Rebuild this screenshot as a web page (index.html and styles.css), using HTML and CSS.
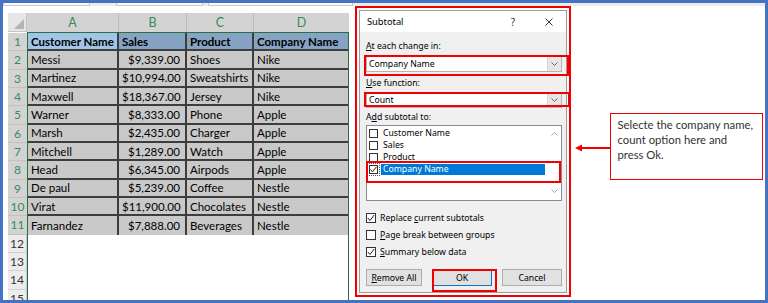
FILE: index.html
```html
<!DOCTYPE html>
<html lang="en">
<head>
<meta charset="UTF-8" />
<meta name="viewport" content="width=device-width, initial-scale=1" />
<title>Subtotal by Company Name</title>
<link rel="stylesheet" href="styles.css">
</head>
<body>
<div class="window">
  <div class="formula-strip">
    <span class="strip-box name-box"></span>
    <span class="strip-box fx-box"></span>
    <span class="strip-box bar-box"></span>
  </div>

  <div class="workspace">
    <!-- feuille -->
    <div class="sheet">
      <div class="col-heads">
        <div class="corner"></div>
        <div class="col-head col-a">A</div>
        <div class="col-head col-b">B</div>
        <div class="col-head col-c">C</div>
        <div class="col-head col-d">D</div>
      </div>
      <div class="sheet-body">
        <div class="row-heads">
          <div class="row-head sel">1</div>
          <div class="row-head sel">2</div>
          <div class="row-head sel">3</div>
          <div class="row-head sel">4</div>
          <div class="row-head sel">5</div>
          <div class="row-head sel">6</div>
          <div class="row-head sel">7</div>
          <div class="row-head sel">8</div>
          <div class="row-head sel">9</div>
          <div class="row-head sel">10</div>
          <div class="row-head sel">11</div>
          <div class="row-head">12</div>
          <div class="row-head">13</div>
          <div class="row-head">14</div>
          <div class="row-head">15</div>
        </div>
        <div class="selection">
          <table class="data">
            <colgroup>
              <col class="w-a"><col class="w-b"><col class="w-c"><col class="w-d">
            </colgroup>
            <tr class="head">
              <td class="active">Customer Name</td><td>Sales</td><td>Product</td><td>Company Name</td>
            </tr>
            <tr><td>Messi</td><td class="num">$9,339.00</td><td>Shoes</td><td>Nike</td></tr>
            <tr><td>Martinez</td><td class="num">$10,994.00</td><td>Sweatshirts</td><td>Nike</td></tr>
            <tr><td>Maxwell</td><td class="num">$18,367.00</td><td>Jersey</td><td>Nike</td></tr>
            <tr><td>Warner</td><td class="num">$8,333.00</td><td>Phone</td><td>Apple</td></tr>
            <tr><td>Marsh</td><td class="num">$2,435.00</td><td>Charger</td><td>Apple</td></tr>
            <tr><td>Mitchell</td><td class="num">$1,289.00</td><td>Watch</td><td>Apple</td></tr>
            <tr><td>Head</td><td class="num">$6,345.00</td><td>Airpods</td><td>Apple</td></tr>
            <tr><td>De paul</td><td class="num">$5,239.00</td><td>Coffee</td><td>Nestle</td></tr>
            <tr><td>Virat</td><td class="num">$11,900.00</td><td>Chocolates</td><td>Nestle</td></tr>
            <tr><td>Farnandez</td><td class="num">$7,888.00</td><td>Beverages</td><td>Nestle</td></tr>
          </table>
          <span class="fill-handle"></span>
        </div>
      </div>
    </div>

    <!-- boîte de dialogue Sous-total -->
    <div class="dialog-mark">
      <div class="dialog">
        <div class="dialog-title">
          <span class="title-text">Subtotal</span>
          <span class="title-btn">?</span>
          <span class="title-btn close">
            <svg width="8" height="8" viewBox="0 0 8 8"><path d="M0.5 0.5 L7.5 7.5 M7.5 0.5 L0.5 7.5" stroke="#333" stroke-width="1"/></svg>
          </span>
        </div>
        <div class="dialog-body">
          <div class="label"><u>A</u>t each change in:</div>
          <div class="combo combo-first">
            <span class="combo-value">Company Name</span>
            <span class="combo-arrow"><svg width="7" height="4" viewBox="0 0 7 4"><polyline points="0.5,0.5 3.5,3.5 6.5,0.5" fill="none" stroke="#666"/></svg></span>
            <span class="mark mark-first"></span>
          </div>
          <div class="label label-fn"><u>U</u>se function:</div>
          <div class="combo combo-second">
            <span class="combo-value">Count</span>
            <span class="combo-arrow"><svg width="7" height="4" viewBox="0 0 7 4"><polyline points="0.5,0.5 3.5,3.5 6.5,0.5" fill="none" stroke="#666"/></svg></span>
            <span class="mark mark-second"></span>
          </div>
          <div class="label label-add">A<u>d</u>d subtotal to:</div>
          <div class="listbox">
            <div class="list-items">
              <div class="list-item"><span class="check small"></span><span class="item-text">Customer Name</span></div>
              <div class="list-item"><span class="check small"></span><span class="item-text">Sales</span></div>
              <div class="list-item"><span class="check small"></span><span class="item-text">Product</span></div>
              <div class="list-item picked">
                <span class="check small"><svg width="7" height="7" viewBox="0 0 7 7"><polyline points="0.5,3.5 2.5,5.8 6.5,0.8" fill="none" stroke="#222" stroke-width="1"/></svg></span>
                <span class="item-text">Company Name</span>
                <span class="mark mark-item"></span>
              </div>
            </div>
            <div class="scroll">
              <svg width="7" height="4" viewBox="0 0 7 4"><polyline points="0.5,3.5 3.5,0.5 6.5,3.5" fill="none" stroke="#a6a6a6"/></svg>
              <svg width="7" height="4" viewBox="0 0 7 4"><polyline points="0.5,0.5 3.5,3.5 6.5,0.5" fill="none" stroke="#a6a6a6"/></svg>
            </div>
          </div>
          <div class="options">
            <div class="option"><span class="check"><svg width="8" height="8" viewBox="0 0 8 8"><polyline points="0.8,4 3,6.5 7.2,1" fill="none" stroke="#222" stroke-width="1"/></svg></span><span>Replace <u>c</u>urrent subtotals</span></div>
            <div class="option"><span class="check"></span><span><u>P</u>age break between groups</span></div>
            <div class="option"><span class="check"><svg width="8" height="8" viewBox="0 0 8 8"><polyline points="0.8,4 3,6.5 7.2,1" fill="none" stroke="#222" stroke-width="1"/></svg></span><span><u>S</u>ummary below data</span></div>
          </div>
          <div class="buttons">
            <span class="btn btn-remove"><span><u>R</u>emove All</span></span>
            <span class="btn btn-ok">OK<span class="mark mark-ok"></span></span>
            <span class="btn btn-cancel">Cancel</span>
          </div>
        </div>
      </div>
    </div>

    <!-- note -->
    <div class="note">
      <svg class="note-arrow" width="35" height="10" viewBox="0 0 35 10">
        <line x1="5" y1="5" x2="35" y2="5" stroke="#f20000" stroke-width="2"/>
        <polygon points="0,5 7,1.5 7,8.5" fill="#f20000"/>
      </svg>
      <div class="note-box">Selecte the company name,<br>count option here and<br>press Ok.</div>
    </div>
  </div>
</div>
</body>
</html>
```

FILE: styles.css
```css
:root {
  --frame-blue: #4472c4;
  --mark-red: #f20000;
  --xl-green: #217346;
  --xl-green-text: #3a8a5a;
  --cell-line: #3d3d3d;
  --sel-grey: #c9c9c9;
  --head-grey: #d3d3d3;
  --win-blue: #0078d7;
}
* {
  box-sizing: border-box;
}
body {
  margin: 0;
  background: #fff;
}
.window {
  width: 768px;
  height: 303px;
  border: 3px solid var(--frame-blue);
  display: flex;
  flex-direction: column;
  overflow: hidden;
  background: #fff;
}

/* bande du haut */
.formula-strip {
  flex: none;
  height: 3px;
  display: flex;
  background: #ececec;
}
.strip-box {
  height: 3px;
  border: 1px solid #c8c8c8;
  border-top: none;
  background: #fafafa;
}
.name-box { width: 87px; }
.fx-box { width: 87px; margin-left: 26px; }
.bar-box { width: 145px; margin-left: 5px; }

.workspace {
  flex: 1;
  min-height: 0;
  display: flex;
  align-items: flex-start;
  overflow: hidden;
}

/* feuille */
.sheet {
  flex: none;
  width: 341px;
  margin: 7px 0 0 5px;
  font-family: 'Lato', sans-serif;
  font-size: 11.5px;
}
.col-heads {
  display: flex;
  height: 19px;
}
.corner {
  width: 19px;
  position: relative;
  background: #e6e6e6;
  border-right: 1px solid #c4c4c4;
  border-bottom: 1px solid #c4c4c4;
}
.corner::after {
  content: '';
  position: absolute;
  right: 2px;
  bottom: 2px;
  width: 10px;
  height: 10px;
  background: #b4b4b4;
  clip-path: polygon(100% 0, 100% 100%, 0 100%);
}
.col-head {
  background: var(--head-grey);
  color: var(--xl-green-text);
  font-size: 12.5px;
  line-height: 19px;
  text-align: center;
  border-right: 1px solid #bcbcbc;
}
.col-a { width: 92px; }
.col-b { width: 68px; }
.col-c { width: 67px; }
.col-d { width: 95px; border-right: none; }

.sheet-body {
  display: flex;
}
.row-heads {
  width: 19px;
  padding-top: 1px;
}
.row-head {
  height: 18.33px;
  line-height: 18.33px;
  text-align: center;
  font-size: 12px;
  background: #ececec;
  color: #333;
  border-bottom: 1px solid #d2d2d2;
  border-right: 1px solid #c8c8c8;
}
.row-head.sel {
  background: var(--head-grey);
  color: var(--xl-green-text);
  border-bottom-color: #c2c2c2;
  border-right: none;
}
.selection {
  position: relative;
  width: 322px;
  border: 1px solid var(--xl-green);
}
.data {
  width: 320px;
  table-layout: fixed;
  border-collapse: separate;
  border-spacing: 0;
}
.w-a { width: 91px; }
.w-b { width: 68px; }
.w-c { width: 67px; }
.w-d { width: 94px; }
.data td {
  height: 18.33px;
  padding: 0 0 0 3px;
  background: var(--sel-grey);
  color: #000;
  white-space: nowrap;
  overflow: hidden;
  border-right: 2px solid var(--cell-line);
  border-bottom: 2px solid var(--cell-line);
}
.data td:last-child {
  border-right: none;
}
.data tr:last-child td {
  border-bottom: none;
}
.data .num {
  text-align: right;
  padding-right: 5px;
}
.data .head td {
  font-weight: bold;
  background: #86a3c3;
}
.data .head td.active {
  background: #a2c4e7;
}
.fill-handle {
  position: absolute;
  right: -4px;
  bottom: -4px;
  width: 6px;
  height: 6px;
  background: var(--xl-green);
  border: 1px solid #fff;
}

/* dialogue */
.dialog-mark {
  flex: none;
  width: 216px;
  height: 291px;
  margin-left: 6px;
  padding: 2px;
  border: 2px solid var(--mark-red);
}
.dialog {
  height: 100%;
  display: flex;
  flex-direction: column;
  border: 1px solid #9c9c9c;
  background: #f0f0f0;
  font-family: 'Noto Sans', sans-serif;
  font-size: 8.7px;
  color: #000;
}
.dialog-title {
  flex: none;
  height: 21px;
  display: flex;
  align-items: center;
  padding-left: 7px;
  background: #fff;
  font-size: 9.3px;
}
.title-text {
  flex: 1;
}
.title-btn {
  width: 30px;
  text-align: center;
  font-size: 10px;
  color: #333;
}
.title-btn.close {
  margin: 0 2px 0 6px;
  display: flex;
  justify-content: center;
}
.dialog-body {
  flex: 1;
  display: flex;
  flex-direction: column;
  padding: 8px 4px 7px 6px;
}
.label {
  height: 12px;
  line-height: 12px;
}
.label-fn { margin-top: 5px; }
.label-add { margin-top: 3px; }
.combo {
  position: relative;
  height: 16px;
  display: flex;
  align-items: center;
  padding-left: 2px;
  background: #fff;
  border: 1px solid #b4b4b4;
}
.combo-first { margin-top: 4px; }
.combo-second { margin-top: 3px; }
.combo-value {
  flex: 1;
}
.combo-arrow {
  width: 14px;
  height: 100%;
  display: flex;
  align-items: center;
  justify-content: center;
  background: #e6e6e6;
  border-left: 1px solid #d6d6d6;
}
.mark {
  position: absolute;
  border: 2px solid var(--mark-red);
  pointer-events: none;
}
.mark-first { top: -2px; bottom: -5px; left: -3px; right: -8px; }
.mark-second { top: -1px; bottom: 0; left: -3px; right: -9px; }
.mark-item { top: -2px; bottom: -8px; left: -1px; right: -14px; }
.mark-ok { top: -1px; bottom: -7px; left: -1px; right: -6px; }

.listbox {
  height: 76px;
  margin-top: 2px;
  display: flex;
  background: #fff;
  border: 1px solid #8a8d94;
}
.list-items {
  flex: 1;
  padding-top: 1px;
}
.list-item {
  position: relative;
  height: 12px;
  display: flex;
  align-items: center;
  padding-left: 2px;
}
.item-text {
  margin-left: 3px;
  padding-left: 2px;
  line-height: 11px;
}
.picked .item-text {
  flex: 1;
  margin-right: 2px;
  background: var(--win-blue);
  color: #fff;
}
.picked .check {
  outline: 1px dotted #555;
  outline-offset: 1px;
}
.scroll {
  width: 14px;
  display: flex;
  flex-direction: column;
  align-items: center;
  justify-content: space-between;
  padding: 6px 0 7px;
}
.check {
  flex: none;
  width: 10px;
  height: 10px;
  display: inline-flex;
  align-items: center;
  justify-content: center;
  background: #fff;
  border: 1px solid #333;
}
.check.small {
  width: 9px;
  height: 9px;
}
.options {
  margin-top: 8px;
}
.option {
  height: 17px;
  display: flex;
  align-items: center;
  gap: 4px;
}
.buttons {
  display: flex;
  justify-content: space-between;
  margin-top: 9px;
}
.btn {
  position: relative;
  height: 17px;
  display: flex;
  align-items: center;
  justify-content: center;
  background: #e1e1e1;
  border: 1px solid #adadad;
}
.btn-remove { width: 56px; }
.btn-ok { width: 60px; border-color: var(--win-blue); }
.btn-cancel { width: 60px; }

/* note */
.note {
  flex: none;
  display: flex;
  align-items: center;
  margin: 107px 0 0 4px;
}
.note-arrow {
  flex: none;
  margin-top: 3px;
}
.note-box {
  width: 153px;
  height: 67px;
  padding: 3px 0 0 6.5px;
  border: 1.5px solid var(--mark-red);
  font-family: 'Lato', sans-serif;
  font-size: 11.3px;
  line-height: 15px;
  color: #333;
  white-space: nowrap;
}
```
